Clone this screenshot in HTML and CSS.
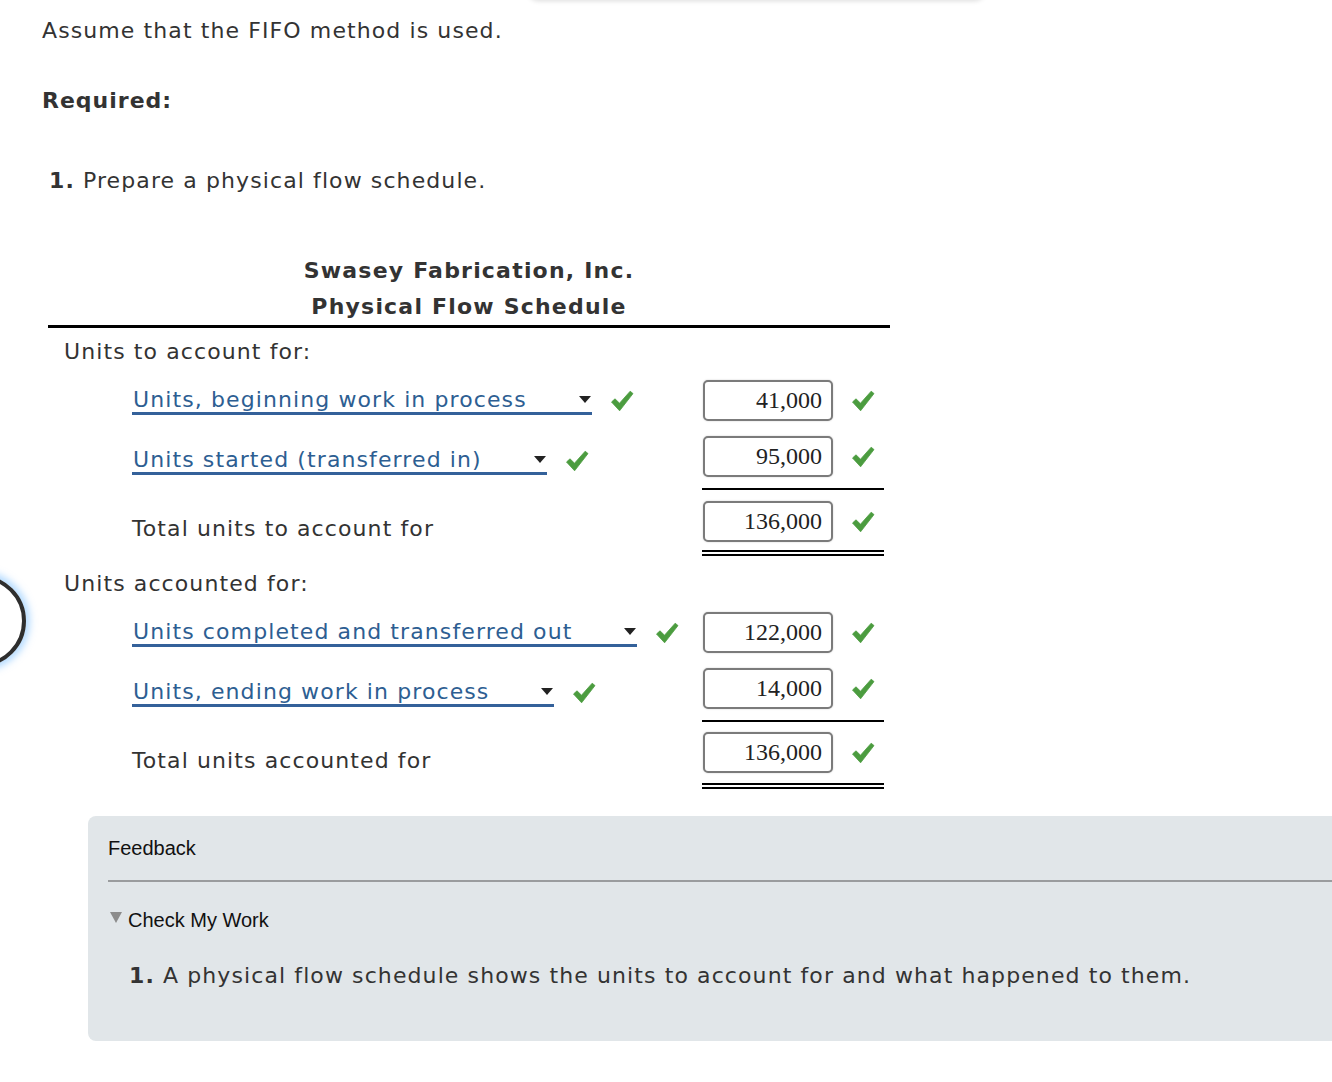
FILE: index.html
```html
<!DOCTYPE html>
<html>
<head>
<meta charset="utf-8">
<link rel="stylesheet" href="styles.css">
</head>
<body>
<div class="topcard"></div>
<div class="ring"></div>
<main class="page">
  <p class="intro">Assume that the FIFO method is used.</p>
  <p class="required">Required:</p>
  <p class="task"><b>1.</b> Prepare a physical flow schedule.</p>

  <section class="schedule">
    <header class="sched-head">
      <div>Swasey Fabrication, Inc.</div>
      <div>Physical Flow Schedule</div>
    </header>

    <div class="section-label">Units to account for:</div>
    <div class="row">
      <div class="left"><span class="select"><span class="opt">Units, beginning work in process</span><span class="arrow"></span></span><svg class="check" viewBox="0 0 24 22"><path d="M1.5 12 L5 8.8 L9.5 13.2 L20.2 1.2 L23 3.6 L9.6 20.8 Z"/></svg></div>
      <div class="right"><span class="num">41,000</span><svg class="check" viewBox="0 0 24 22"><path d="M1.5 12 L5 8.8 L9.5 13.2 L20.2 1.2 L23 3.6 L9.6 20.8 Z"/></svg></div>
    </div>
    <div class="row row-sub">
      <div class="left shift"><span class="select"><span class="opt">Units started (transferred in)</span><span class="arrow"></span></span><svg class="check" viewBox="0 0 24 22"><path d="M1.5 12 L5 8.8 L9.5 13.2 L20.2 1.2 L23 3.6 L9.6 20.8 Z"/></svg></div>
      <div class="right"><span class="num">95,000</span><svg class="check" viewBox="0 0 24 22"><path d="M1.5 12 L5 8.8 L9.5 13.2 L20.2 1.2 L23 3.6 L9.6 20.8 Z"/></svg></div>
    </div>
    <div class="row row-total">
      <div class="left total-label">Total units to account for</div>
      <div class="right"><span class="num">136,000</span><svg class="check" viewBox="0 0 24 22"><path d="M1.5 12 L5 8.8 L9.5 13.2 L20.2 1.2 L23 3.6 L9.6 20.8 Z"/></svg></div>
    </div>

    <div class="section-label second">Units accounted for:</div>
    <div class="row">
      <div class="left"><span class="select"><span class="opt">Units completed and transferred out</span><span class="arrow"></span></span><svg class="check" viewBox="0 0 24 22"><path d="M1.5 12 L5 8.8 L9.5 13.2 L20.2 1.2 L23 3.6 L9.6 20.8 Z"/></svg></div>
      <div class="right"><span class="num">122,000</span><svg class="check" viewBox="0 0 24 22"><path d="M1.5 12 L5 8.8 L9.5 13.2 L20.2 1.2 L23 3.6 L9.6 20.8 Z"/></svg></div>
    </div>
    <div class="row row-sub">
      <div class="left shift"><span class="select"><span class="opt">Units, ending work in process</span><span class="arrow"></span></span><svg class="check" viewBox="0 0 24 22"><path d="M1.5 12 L5 8.8 L9.5 13.2 L20.2 1.2 L23 3.6 L9.6 20.8 Z"/></svg></div>
      <div class="right"><span class="num">14,000</span><svg class="check" viewBox="0 0 24 22"><path d="M1.5 12 L5 8.8 L9.5 13.2 L20.2 1.2 L23 3.6 L9.6 20.8 Z"/></svg></div>
    </div>
    <div class="row row-total last">
      <div class="left total-label">Total units accounted for</div>
      <div class="right"><span class="num">136,000</span><svg class="check" viewBox="0 0 24 22"><path d="M1.5 12 L5 8.8 L9.5 13.2 L20.2 1.2 L23 3.6 L9.6 20.8 Z"/></svg></div>
    </div>
  </section>
</main>

<section class="feedback">
  <div class="fb-title">Feedback</div>
  <div class="fb-toggle"><span class="tri"></span>Check My Work</div>
  <p class="fb-text"><b>1.</b> A physical flow schedule shows the units to account for and what happened to them.</p>
</section>
</body>
</html>
```

FILE: styles.css
```css
html, body {
  margin: 0;
  padding: 0;
  background: #fff;
}
body {
  font-family: "DejaVu Sans", Verdana, sans-serif;
  font-size: 22px;
  letter-spacing: 1.1px;
  color: #333;
  overflow-x: hidden;
}

.topcard {
  position: absolute;
  top: -40px;
  left: 528px;
  width: 457px;
  height: 40px;
  background: #fff;
  border-radius: 0 0 10px 10px;
  box-shadow: 0 1px 5px rgba(0, 0, 0, 0.14);
}

.ring {
  position: absolute;
  left: -66px;
  top: 575px;
  width: 84px;
  height: 84px;
  border: 4px solid #2e2e2e;
  border-radius: 50%;
  box-shadow: 0 0 7px 4px rgba(110, 185, 255, 0.5);
}

.page {
  padding-left: 42px;
  padding-top: 1px;
}

p { margin: 0; }

.intro {
  margin-top: 17px;
  line-height: 26px;
}
.required {
  margin-top: 44px;
  line-height: 26px;
  font-weight: bold;
  letter-spacing: 1px;
}
.task {
  margin-top: 54px;
  margin-left: 7px;
  line-height: 26px;
}

.schedule {
  margin-top: 59px;
  margin-left: 6px;
  width: 842px;
}
.sched-head {
  text-align: center;
  font-weight: bold;
  letter-spacing: 1.2px;
  line-height: 36px;
  padding-bottom: 0;
  border-bottom: 3px solid #000;
}

.section-label {
  margin-top: 11px;
  padding-left: 16px;
  line-height: 26px;
}
.section-label.second {
  margin-top: 15px;
}

.row {
  display: grid;
  grid-template-columns: 654px 182px;
  margin-top: 8px;
}
.row + .row { margin-top: 0; }

.left {
  display: flex;
  align-items: center;
  padding-left: 84px;
  gap: 18px;
}
.left.shift { padding-top: 3px; }
.total-label { padding-top: 11px; line-height: 26px; }

.right {
  display: flex;
  align-items: center;
  gap: 18px;
  padding: 7px 0 8px 1px;
}
.row-sub .right {
  padding-bottom: 11px;
  border-bottom: 2px solid #000;
}
.row-total .right {
  padding-top: 11px;
  padding-bottom: 8px;
  border-bottom: 6px double #000;
}
.row-total.last .right {
  padding-top: 10px;
  padding-bottom: 10px;
}

.select {
  display: inline-flex;
  align-items: center;
  height: 24px;
  background: #fff;
  border-radius: 6px 6px 0 0;
  border-bottom: 3px solid #34619a;
  color: #2d5e92;
  line-height: 24px;
  padding-left: 1px;
}
.opt { padding-right: 52px; white-space: nowrap; }
.arrow {
  width: 0;
  height: 0;
  border-left: 6px solid transparent;
  border-right: 6px solid transparent;
  border-top: 7px solid #222;
  margin-right: 1px;
}

.num {
  box-sizing: border-box;
  width: 130px;
  height: 41px;
  border: 2px solid #7b7b7b;
  border-radius: 5px;
  box-shadow: 0 0 2px rgba(0, 0, 0, 0.2);
  font-family: "Liberation Serif", "Times New Roman", serif;
  font-size: 24px;
  letter-spacing: 0;
  line-height: 37px;
  text-align: right;
  padding-right: 9px;
  color: #222;
  background: #fff;
}

.check {
  width: 24px;
  height: 22px;
  flex: none;
}
.check path {
  fill: #4b9c3f;
  stroke: #4b9c3f;
  stroke-width: 0.8;
  stroke-linejoin: round;
}

.feedback {
  margin-top: 27px;
  margin-left: 88px;
  background: #e1e6e9;
  border-radius: 8px 0 0 8px;
  padding: 20px 0 52px 20px;
}
.fb-title {
  font-family: "Liberation Sans", Arial, sans-serif;
  font-size: 20px;
  letter-spacing: 0;
  color: #111;
  line-height: 24px;
  padding-bottom: 20px;
  border-bottom: 2px solid #9a9c9e;
}
.fb-toggle {
  margin-top: 26px;
  font-family: "Liberation Sans", Arial, sans-serif;
  font-size: 20px;
  letter-spacing: 0;
  color: #111;
  line-height: 24px;
  display: flex;
  align-items: center;
}
.tri {
  width: 0;
  height: 0;
  border-left: 6px solid transparent;
  border-right: 6px solid transparent;
  border-top: 11px solid #8c8c8c;
  margin: -6px 6px 0 2px;
}
.fb-text {
  margin-top: 31px;
  margin-left: 21px;
  line-height: 26px;
}
```
